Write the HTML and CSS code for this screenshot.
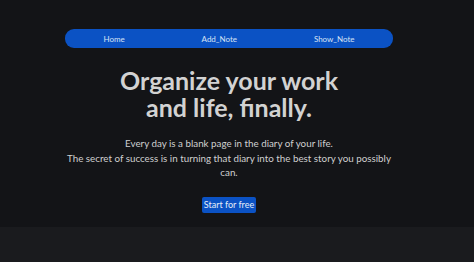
FILE: index.html
```html
<!DOCTYPE html>
<html lang="en">
  <head>
    <meta charset="UTF-8" />
    <meta name="viewport" content="width=device-width, initial-scale=1.0" />
    <title>Notes</title>
    <link rel="stylesheet" href="styles.css">
  </head>
  <body>
    <section class="hero">
      <nav class="navbar">
        <a class="nav-link" href="#">Home</a>
        <a class="nav-link" href="#">Add_Note</a>
        <a class="nav-link" href="#">Show_Note</a>
      </nav>
      <h1 class="title">Organize your work<br />and life, finally.</h1>
      <p class="lead">
        Every day is a blank page in the diary of your life.<br />
        The secret of success is in turning that diary into the best story you possibly can.
      </p>
      <button class="btn">Start for free</button>
    </section>
    <footer class="footer"></footer>
  </body>
</html>
```

FILE: styles.css
```css
* {
  box-sizing: border-box;
}
body {
  margin: 0;
  padding: 0;
  background: #131417;
  color: #d4d4d4;
  font-family: "Lato", "Noto Sans", sans-serif;
}
.hero {
  width: 458px;
  height: 227px;
  display: flex;
  flex-direction: column;
  align-items: center;
  padding-top: 29px;
}
.navbar {
  width: 328px;
  height: 19px;
  background: #0b52c4;
  border-radius: 9px;
  display: flex;
  justify-content: space-around;
  align-items: center;
}
.nav-link {
  color: #d6e2f5;
  font-size: 8px;
  text-decoration: none;
}
.title {
  margin: 19px 0 0;
  font-size: 25px;
  line-height: 27px;
  font-weight: 700;
  text-align: center;
  color: #d2d2d2;
}
.lead {
  margin: 15px 0 0;
  width: 330px;
  font-size: 9.8px;
  line-height: 14.5px;
  text-align: center;
  color: #d0d0d0;
}
.btn {
  margin-top: 17px;
  padding: 2px 2px;
  border: none;
  border-radius: 2px;
  background: #0b52c4;
  color: #e4ecf8;
  font-family: inherit;
  font-size: 9px;
  line-height: 12px;
}
.footer {
  height: 35px;
  background: #1a1b1e;
}
```
